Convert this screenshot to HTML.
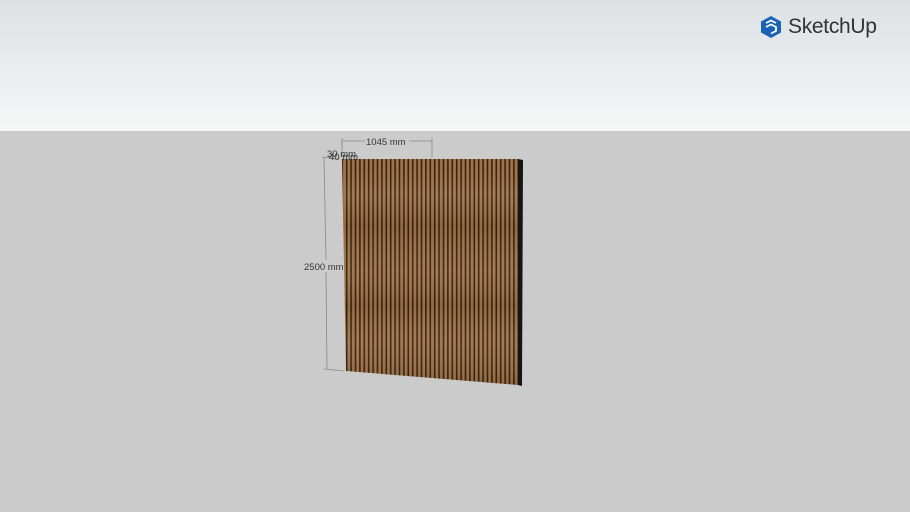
<!DOCTYPE html>
<html><head><style>
html,body{margin:0;padding:0;width:910px;height:512px;overflow:hidden;font-family:"Liberation Sans",sans-serif}
.sky{position:absolute;left:0;top:0;width:910px;height:131px;background:linear-gradient(#dde1e4,#f2f3f4 85%,#f7f7f7)}
.ground{position:absolute;left:0;top:131px;width:910px;height:381px;background:#cbcbcb}
.logo{position:absolute;left:760px;top:15px;font-size:21px;color:#333;display:flex;align-items:center;gap:6px;letter-spacing:-0.3px}
</style></head><body>
<div class="sky"></div><div class="ground"></div>
<div class="logo"><svg width="22" height="24" viewBox="0 0 22 24"><path d="M11 1 L21 6.5 V17.5 L11 23 L1 17.5 V6.5 Z" fill="#1a62b5"/><path d="M6 8 L11 5.5 L16 8 M6 12 L11 9.5 L16 12 V16 L11 18.5" stroke="#fff" stroke-width="1.8" fill="none"/></svg><span>SketchUp</span></div>
<svg style="position:absolute;left:0;top:0" width="910" height="512">
<defs>
<pattern id="s" x="342" y="0" width="4.4" height="10" patternUnits="userSpaceOnUse">
<rect width="4.4" height="10" fill="#33220f"/><rect x="1.1" width="2.8" height="10" fill="#a3744a"/>
</pattern>
<linearGradient id="g" x1="0" y1="0" x2="0" y2="1">
<stop offset="0" stop-color="#000" stop-opacity="0"/>
<stop offset="0.15" stop-color="#fff" stop-opacity="0.06"/>
<stop offset="0.3" stop-color="#000" stop-opacity="0.08"/>
<stop offset="0.5" stop-color="#fff" stop-opacity="0.05"/>
<stop offset="0.65" stop-color="#000" stop-opacity="0.08"/>
<stop offset="0.8" stop-color="#fff" stop-opacity="0.05"/>
<stop offset="1" stop-color="#000" stop-opacity="0.1"/>
</linearGradient>
</defs>
<polygon points="342,159 518,159 518,385 346,371" fill="url(#s)"/>
<polygon points="342,159 518,159 518,385 346,371" fill="url(#g)"/>
<polygon points="518,159 523,160 522,386 518,385" fill="#151515"/>
<g stroke="#888" stroke-width="0.8" fill="none">
<line x1="342" y1="157" x2="342" y2="138"/><line x1="432" y1="157" x2="432" y2="138"/>
<line x1="342" y1="141" x2="365" y2="141"/><line x1="409" y1="141" x2="432" y2="141"/>
<line x1="340" y1="159" x2="322" y2="157"/><line x1="344" y1="371" x2="324" y2="369"/>
<line x1="324" y1="157" x2="326" y2="260"/><line x1="326" y1="272" x2="327" y2="369"/>
</g>
<g font-family="Liberation Sans" font-size="9.5" fill="#333">
<text x="366" y="145">1045 mm</text>
<text x="327" y="157">30 mm</text><text x="329" y="160">40 mm</text>
<text x="304" y="270">2500 mm</text>
</g>
</svg>
</body></html>
